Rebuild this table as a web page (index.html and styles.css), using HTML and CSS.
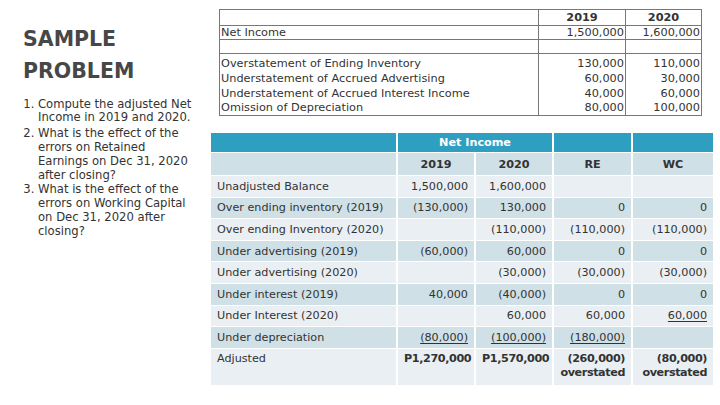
FILE: index.html
```html
<!DOCTYPE html>
<html lang="en">
<head>
    <meta charset="UTF-8">
    <title>Sample Problem</title>
    <link rel="stylesheet" href="styles.css">
</head>
<body>
<section class="slide">
    <div class="side">
        <h1 class="title">SAMPLE<br>PROBLEM</h1>
        <ol class="questions">
            <li>Compute the adjusted Net<br>Income in 2019 and 2020.</li>
            <li>What is the effect of the<br>errors on Retained<br>Earnings on Dec 31, 2020<br>after closing?</li>
            <li>What is the effect of the<br>errors on Working Capital<br>on Dec 31, 2020 after<br>closing?</li>
        </ol>
    </div>
    <div class="main">
        <table class="given">
            <colgroup>
                <col class="w-lbl">
                <col class="w-y1">
                <col class="w-y2">
            </colgroup>
            <tr class="head">
                <td></td>
                <td class="num">2019</td>
                <td class="num">2020</td>
            </tr>
            <tr class="line ni">
                <td>Net Income</td>
                <td class="num">1,500,000</td>
                <td class="num">1,600,000</td>
            </tr>
            <tr class="line blank">
                <td></td>
                <td class="num"></td>
                <td class="num"></td>
            </tr>
            <tr class="line r1">
                <td>Overstatement of Ending Inventory</td>
                <td class="num">130,000</td>
                <td class="num">110,000</td>
            </tr>
            <tr class="r2">
                <td>Understatement of Accrued Advertising</td>
                <td class="num">60,000</td>
                <td class="num">30,000</td>
            </tr>
            <tr class="r3">
                <td>Understatement of Accrued Interest Income</td>
                <td class="num">40,000</td>
                <td class="num">60,000</td>
            </tr>
            <tr class="r4">
                <td>Omission of Depreciation</td>
                <td class="num">80,000</td>
                <td class="num">100,000</td>
            </tr>
        </table>

        <table class="answer">
            <colgroup>
                <col class="w-item">
                <col class="w-n1">
                <col class="w-n2">
                <col class="w-re">
                <col class="w-wc">
            </colgroup>
            <tr class="top">
                <td></td>
                <td colspan="2">Net Income</td>
                <td></td>
                <td></td>
            </tr>
            <tr class="sub dark">
                <td></td>
                <td>2019</td>
                <td>2020</td>
                <td>RE</td>
                <td>WC</td>
            </tr>
            <tr class="light">
                <td>Unadjusted Balance</td>
                <td>1,500,000</td>
                <td>1,600,000</td>
                <td></td>
                <td></td>
            </tr>
            <tr class="dark">
                <td>Over ending inventory (2019)</td>
                <td>(130,000)</td>
                <td>130,000</td>
                <td>0</td>
                <td>0</td>
            </tr>
            <tr class="light">
                <td>Over ending Inventory (2020)</td>
                <td></td>
                <td>(110,000)</td>
                <td>(110,000)</td>
                <td>(110,000)</td>
            </tr>
            <tr class="dark">
                <td>Under advertising (2019)</td>
                <td>(60,000)</td>
                <td>60,000</td>
                <td>0</td>
                <td>0</td>
            </tr>
            <tr class="light">
                <td>Under advertising (2020)</td>
                <td></td>
                <td>(30,000)</td>
                <td>(30,000)</td>
                <td>(30,000)</td>
            </tr>
            <tr class="dark">
                <td>Under interest (2019)</td>
                <td>40,000</td>
                <td>(40,000)</td>
                <td>0</td>
                <td>0</td>
            </tr>
            <tr class="light">
                <td>Under Interest (2020)</td>
                <td></td>
                <td>60,000</td>
                <td>60,000</td>
                <td><u>60,000</u></td>
            </tr>
            <tr class="dark">
                <td>Under depreciation</td>
                <td><u>(80,000)</u></td>
                <td><u>(100,000)</u></td>
                <td><u>(180,000)</u></td>
                <td></td>
            </tr>
            <tr class="light total">
                <td>Adjusted</td>
                <td>P1,270,000</td>
                <td>P1,570,000</td>
                <td>(260,000)<br>overstated</td>
                <td>(80,000)<br>overstated</td>
            </tr>
        </table>
    </div>
</section>
</body>
</html>
```

FILE: styles.css
```css
body{ margin: 0; background: #fff; color: #333; font-family: "DejaVu Sans", "Open Sans", sans-serif;}
.slide{ width: 720px; height: 405px; display: flex; overflow: hidden;}

/* left column */
.side{ width: 205px; flex: none;}
.title{ margin: 23px 0 0 23px; font-size: 20.5px; line-height: 32px; font-weight: bold; color: #474747;}
.questions{ margin: 11px 0 0; padding-left: 38px; font-size: 11.6px; line-height: 14px; color: #333;}
.questions li:first-child{ line-height: 13px; margin-bottom: 2px;}

/* right column */
.main{ flex: 1; display: flex; flex-direction: column;}

/* given data */
.given{ margin: 9px 0 0 14px; width: 482px; table-layout: fixed; border-collapse: collapse; font-size: 11.3px; color: #333;}
.given .w-lbl{ width: 319px;}
.given .w-y1{ width: 87px;}
.given .w-y2{ width: 76px;}
.given td{ padding: 0 1px; border-left: 1px solid #777; border-right: 1px solid #777; line-height: 13px; white-space: nowrap; overflow: hidden;}
.given .head td{ border-top: 1px solid #777; height: 15px; text-align: center; font-weight: bold; line-height: 14px; vertical-align: bottom;}
.given .ni td{ height: 13px;}
.given .blank td{ height: 13px;}
.given .r1 td{ height: 16px; vertical-align: bottom;}
.given .r2 td{ height: 16px;}
.given .r3 td{ height: 15px;}
.given .r4 td{ height: 14px; border-bottom: 1px solid #777; vertical-align: top;}
.given .line td{ border-top: 1px solid #777;}
.given .num{ text-align: right;}

/* working table */
.answer{ margin: 17px 0 0 6px; width: 502px; table-layout: fixed; border-collapse: collapse; font-size: 11.2px; color: #333;}
.answer .w-item{ width: 186px;}
.answer .w-n1{ width: 78px;}
.answer .w-n2{ width: 78px;}
.answer .w-re{ width: 79px;}
.answer .w-wc{ width: 81px;}
.answer td{ height: 20.6px; padding: 0 6px; text-align: right; border: 1px solid #fff; border-width: 0 2px 1px 0; white-space: nowrap;}
.answer td:first-child{ text-align: left;}
.answer td:last-child{ border-right: 0;}
.answer .top td{ background: #2f9fc1; color: #fff; font-weight: bold; text-align: center; height: 19px;}
.answer .sub td{ font-weight: bold; text-align: center; height: 22px;}
.answer .dark td{ background: #d0e0e7;}
.answer .light td{ background: #e9eff2;}
.answer .total td{ height: 33px; vertical-align: top; padding-top: 3px; font-weight: bold; line-height: 14px; letter-spacing: -0.4px;}
.answer .total td:first-child{ font-weight: normal; letter-spacing: 0;}
.answer u{ text-underline-offset: 2px;}
```
